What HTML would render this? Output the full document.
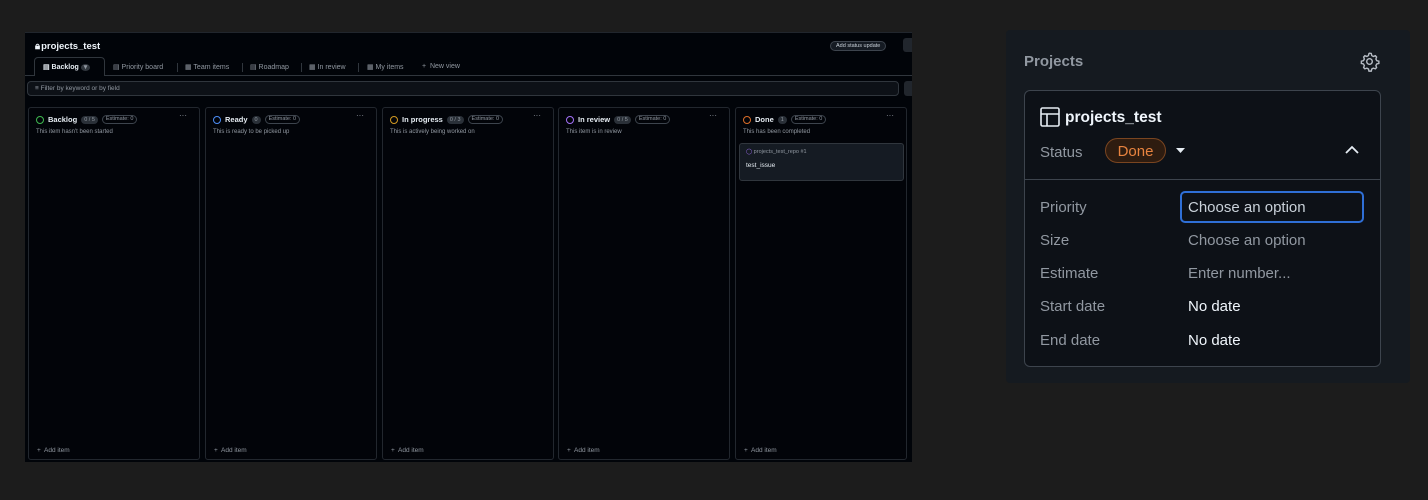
<!DOCTYPE html>
<html><head><meta charset="utf-8"><style>
*{box-sizing:border-box;margin:0;padding:0}
body{width:1428px;height:500px;background:#1c1c1c;font-family:"Liberation Sans",sans-serif;position:relative;overflow:hidden;color:#e6edf3}
.a{position:absolute}
#left{left:25px;top:32px;width:887px;height:430px;background:#010409;overflow:hidden;border-top:1px solid #21262d}
.tabs span{position:absolute;top:30px;font-size:7px;color:#9198a1}
.sep{position:absolute;top:30px;width:1px;height:9px;background:#30363d}
.col{position:absolute;top:74px;width:172px;height:353px;background:#020409;border:1px solid #22272e;border-radius:3px}
.col .h{position:absolute;left:7px;top:7px;font-size:7.5px;font-weight:bold;color:#e6edf3;display:flex;align-items:center;gap:4px;white-space:nowrap}
.dot{width:8px;height:8px;border-radius:50%;border:1.3px solid}
.pill{font-size:5.5px;font-weight:normal;color:#9198a1;border:1px solid #3d444d;border-radius:6px;padding:0 3px;line-height:7px}
.cnt{font-size:5.5px;font-weight:normal;color:#9198a1;background:#2a3038;border-radius:6px;padding:0 3px;line-height:8px}
.col .d{position:absolute;left:7px;top:21px;font-size:6px;color:#9198a1}
.col .m{position:absolute;right:12px;top:3px;font-size:8px;color:#9198a1}
.col .add{position:absolute;left:8px;bottom:5px;font-size:6.5px;color:#9198a1}
#right{left:1006px;top:30px;width:404px;height:353px;background:#151a20;border-radius:4px}
.lbl{position:absolute;left:1040px;font-size:15px;color:#9198a1}
.val{position:absolute;left:1188px;font-size:15px}
</style></head><body>
<div id="left" class="a">
 <div class="a" style="left:10px;top:8px;font-size:9.5px;font-weight:bold;color:#f0f6fc">&#128274;&#xFE0E;<span style="margin-left:1px">projects_test</span></div>
 <div class="a" style="left:805px;top:8px;font-size:5.5px;color:#c9d1d9;border:1px solid #3d444d;background:#151b23;border-radius:7px;padding:1px 5px">Add status update</div>
 <div class="a" style="left:878px;top:5px;width:14px;height:14px;background:#21262d;border-radius:3px"></div>
 <div class="a" style="left:0;top:42px;width:887px;height:1px;background:#30363d"></div>
 <div class="a" style="left:9px;top:24px;width:71px;height:19px;border:1px solid #30363d;border-bottom:none;border-radius:4px 4px 0 0;background:#010409"></div>
 <div class="tabs">
  <span style="left:18px;color:#e6edf3;font-weight:bold">&#9636; Backlog <span style="position:static;background:#30363d;border-radius:50%;padding:0 3px">&#9662;</span></span>
  <span style="left:88px">&#9636; Priority board</span><i class="sep" style="left:152px"></i>
  <span style="left:160px">&#9638; Team items</span><i class="sep" style="left:217px"></i>
  <span style="left:225px">&#9636; Roadmap</span><i class="sep" style="left:276px"></i>
  <span style="left:284px">&#9638; In review</span><i class="sep" style="left:333px"></i>
  <span style="left:342px">&#9638; My items</span>
  <span style="left:397px">+&nbsp; New view</span>
 </div>
 <div class="a" style="left:2px;top:48px;width:872px;height:15px;border:1px solid #30363d;border-radius:4px;background:#0d1117;font-size:6.5px;color:#9198a1;padding:3px 0 0 7px">&#8801; Filter by keyword or by field</div>
 <div class="a" style="left:879px;top:48px;width:12px;height:15px;background:#21262d;border-radius:3px"></div>

 <div class="col" style="left:3px"><div class="h"><span class="dot" style="border-color:#3fb950"></span>Backlog <span class="cnt">0 / 5</span><span class="pill">Estimate: 0</span></div><div class="m">···</div><div class="d">This item hasn't been started</div><div class="add">+&nbsp; Add item</div></div>
 <div class="col" style="left:180px"><div class="h"><span class="dot" style="border-color:#4c8df6"></span>Ready <span class="cnt">0</span><span class="pill">Estimate: 0</span></div><div class="m">···</div><div class="d">This is ready to be picked up</div><div class="add">+&nbsp; Add item</div></div>
 <div class="col" style="left:357px"><div class="h"><span class="dot" style="border-color:#d29922"></span>In progress <span class="cnt">0 / 3</span><span class="pill">Estimate: 0</span></div><div class="m">···</div><div class="d">This is actively being worked on</div><div class="add">+&nbsp; Add item</div></div>
 <div class="col" style="left:533px"><div class="h"><span class="dot" style="border-color:#a371f7"></span>In review <span class="cnt">0 / 5</span><span class="pill">Estimate: 0</span></div><div class="m">···</div><div class="d">This item is in review</div><div class="add">+&nbsp; Add item</div></div>
 <div class="col" style="left:710px"><div class="h"><span class="dot" style="border-color:#db6d28"></span>Done <span class="cnt">1</span><span class="pill">Estimate: 0</span></div><div class="m">···</div><div class="d">This has been completed</div>
  <div class="a" style="left:3px;top:35px;width:165px;height:38px;background:#151b23;border:1px solid #30363d;border-radius:3px">
   <div class="a" style="left:6px;top:5px;font-size:5.5px;color:#9198a1"><span style="color:#a371f7">&#9711;</span> projects_test_repo #1</div>
   <div class="a" style="left:6px;top:18px;font-size:6.5px;color:#e6edf3">test_issue</div>
  </div>
  <div class="add">+&nbsp; Add item</div></div>
</div>

<div id="right" class="a"></div>
<div class="a" style="left:1024px;top:53px;font-size:15px;font-weight:bold;color:#9198a1">Projects</div>
<svg class="a" style="left:1359px;top:51px" width="21" height="21" viewBox="0 0 24 24" fill="none" stroke="#b7bdc5" stroke-width="1.6"><circle cx="12" cy="12" r="3.2"/><path d="M12 2.5l2 .3.6 2.4 1.8 1 2.3-.8 1.4 1.5-.8 2.3 1 1.8 2.4.6v2.6l-2.4.6-1 1.8.8 2.3-1.4 1.5-2.3-.8-1.8 1-.6 2.4h-2.6l-.6-2.4-1.8-1-2.3.8-1.4-1.5.8-2.3-1-1.8-2.4-.6v-2.6l2.4-.6 1-1.8-.8-2.3 1.4-1.5 2.3.8 1.8-1 .6-2.4z"/></svg>
<div class="a" style="left:1024px;top:90px;width:357px;height:277px;border:1px solid #3d444d;border-radius:6px;background:#0d1117"></div>
<div class="a" style="left:1025px;top:179px;width:355px;height:1px;background:#3d444d"></div>
<svg class="a" style="left:1040px;top:107px" width="20" height="20" viewBox="0 0 20 20" fill="none" stroke="#e6edf3" stroke-width="1.6"><rect x="1" y="1" width="18" height="18" rx="1.5"/><path d="M1 7h18M7 7v12"/></svg>
<div class="a" style="left:1065px;top:109px;font-size:15.5px;font-weight:bold;color:#f0f6fc">projects_test</div>
<div class="a" style="left:1040px;top:144px;font-size:15px;color:#9198a1">Status</div>
<div class="a" style="left:1105px;top:138px;width:61px;height:25px;border:1px solid #7a4520;background:#2e1c10;border-radius:13px;font-size:15px;color:#e8833f;text-align:center;line-height:25px">Done</div>
<svg class="a" style="left:1175px;top:147px" width="11" height="7"><path d="M1 1h9l-4.5 5z" fill="#e6edf3"/></svg>
<svg class="a" style="left:1344px;top:145px" width="16" height="10"><path d="M2 8l6-6 6 6" fill="none" stroke="#e6edf3" stroke-width="1.8"/></svg>
<div class="a" style="left:1180px;top:191px;width:184px;height:32px;border:2px solid #2f6fd6;border-radius:5px"></div>
<div class="lbl" style="top:199px">Priority</div><div class="val" style="top:199px;color:#c9d1d9">Choose an option</div>
<div class="lbl" style="top:232px">Size</div><div class="val" style="top:232px;color:#9198a1">Choose an option</div>
<div class="lbl" style="top:265px">Estimate</div><div class="val" style="top:265px;color:#9198a1">Enter number...</div>
<div class="lbl" style="top:298px">Start date</div><div class="val" style="top:298px;color:#f0f6fc">No date</div>
<div class="lbl" style="top:332px">End date</div><div class="val" style="top:332px;color:#f0f6fc">No date</div>
</body></html>
